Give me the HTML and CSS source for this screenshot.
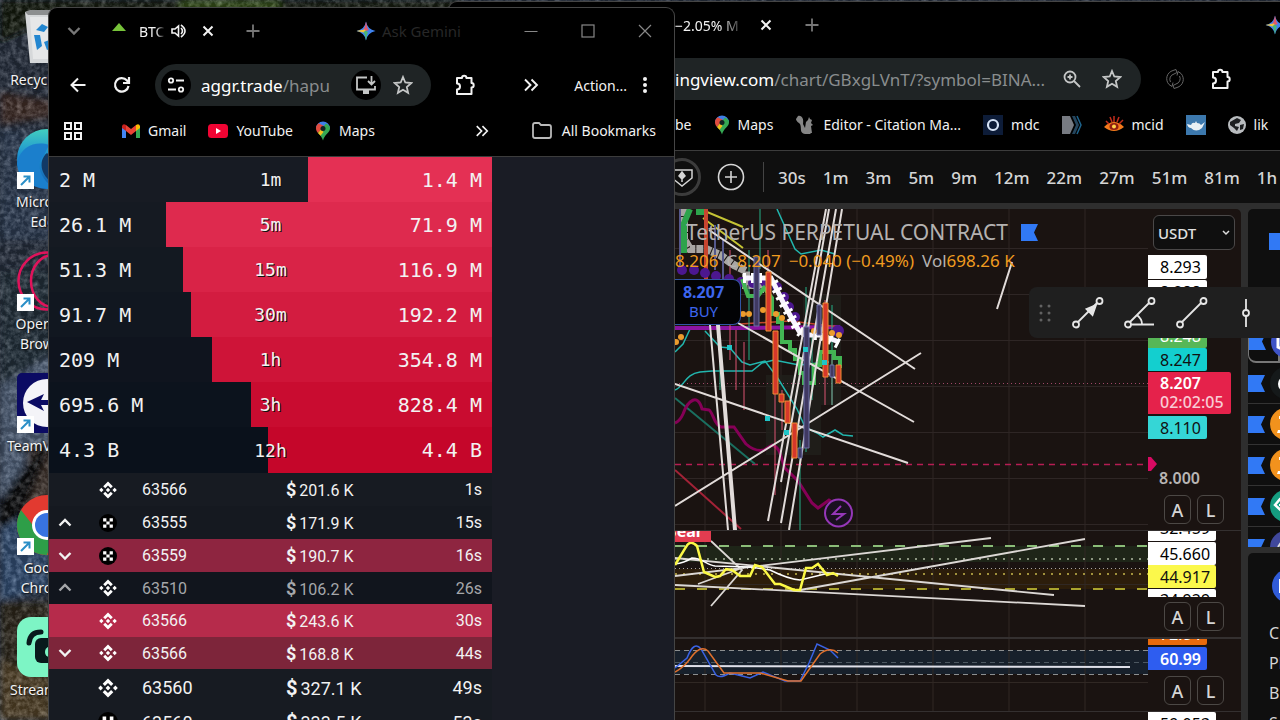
FILE: index.html
```html
<!DOCTYPE html>
<html lang="en">
<head>
<meta charset="utf-8">
<title>Trading desktop</title>
<link rel="stylesheet" href="styles.css">
</head>
<body>
<svg width="0" height="0" class="sprite" aria-hidden="true">
  <defs>
    <linearGradient id="edge" x1="0" y1="0" x2="0" y2="1"><stop offset="0" stop-color="#43cfc0"/><stop offset="0.45" stop-color="#1b8fd2"/><stop offset="1" stop-color="#155da8"/></linearGradient>
    <symbol id="i-close" viewBox="0 0 16 16"><path d="M3.500 3.500l9 9M12.500 3.500l-9 9" fill="none" stroke="currentColor" stroke-width="2"/></symbol>
    <symbol id="i-plus" viewBox="0 0 16 16"><path d="M8 1.500v13M1.500 8h13" fill="none" stroke="currentColor" stroke-width="1.800"/></symbol>
    <symbol id="i-gemini" viewBox="0 0 20 20"><path d="M10 0.500Q11.500 8.500 19.500 10Q11.500 11.500 10 19.500Q8.500 11.500 0.500 10Q8.500 8.500 10 0.500Z" fill="#3f83f0"/><path d="M10 0.500Q11.500 8.500 13 9L10 10Z M10 0.500Q8.500 8.500 7 9L10 10Z" fill="#e0586a"/><path d="M0.500 10Q8 8.500 8.500 8.500L10 10L8.500 11.500Q8 11.500 0.500 10Z" fill="#f2c53c"/><path d="M10 19.500Q8.700 12 7.500 11L10 9.500L12 11.500Q11 12.500 10 19.500Z" fill="#49b675"/></symbol>
    <symbol id="i-star" viewBox="0 0 20 20"><path d="M10 2l2.300 5.500 6 .500-4.500 4 1.300 5.800L10 14.700l-5.100 3.100 1.300-5.800-4.500-4 6-.500z" fill="none" stroke="currentColor" stroke-width="1.800"/></symbol>
    <symbol id="i-puzzle" viewBox="0 0 22 22"><path d="M3 4h5a2.200 2.200 0 0 1 4.400 0H17.500v5a2.200 2.200 0 0 1 0 4.400V20H3v-4.600a3 3 0 0 0 0-6z" fill="none" stroke="currentColor" stroke-width="2" stroke-linejoin="round"/></symbol>
    <symbol id="i-more" viewBox="0 0 16 16"><path d="M2 2.500L7.500 8 2 13.500M8.500 2.500L14 8l-5.500 5.500" fill="none" stroke="currentColor" stroke-width="1.900"/></symbol>
    <symbol id="i-pin" viewBox="0 0 16 20"><path d="M8 0.500a7 7 0 0 0-7 7h14a7 7 0 0 0-7-7z" fill="#3f7fe8"/><path d="M1 7.500C1 9 1.700 10.500 3 12L9 5 3.500 2.200A7 7 0 0 0 1 7.500z" fill="#e14b3d"/><path d="M3 12l8-9.500C14 4 15 5.500 15 7.500c0 4-5.500 6-7 12C7 16 5 14 3 12z" fill="#35a853"/><path d="M3 12l3-3.500 2.500 2.500L5.500 14.700z" fill="#f6bd1c"/><circle cx="8" cy="7.500" r="2.500" fill="#122"/></symbol>
    <symbol id="i-binance" viewBox="0 0 20 20"><path d="M10 0.500l5.300 5.300-2.200 2.200L10 4.900 6.900 8 4.700 5.800zM10 19.500l5.300-5.300-2.200-2.200-3.100 3.100L6.900 12l-2.200 2.200zM10 7.600l2.400 2.400-2.400 2.400L7.600 10zM2.600 7.600L5 10l-2.400 2.400L0.200 10zM17.400 7.600l2.400 2.400-2.400 2.400L15 10z" fill="#fff"/></symbol>
    <symbol id="i-okx" viewBox="0 0 20 20"><circle cx="10" cy="10" r="10" fill="#000"/><path d="M4.600 4.600h3.600v3.600h3.600V4.600h3.600v3.600h-3.600v3.600h3.600v3.600h-3.600v-3.600H8.200v3.600H4.600v-3.600h3.600V8.200H4.600z" fill="#fff"/></symbol>
    <symbol id="i-up" viewBox="0 0 16 16"><path d="M2.500 10.500L8 5l5.500 5.500" fill="none" stroke="currentColor" stroke-width="2.400"/></symbol>
    <symbol id="i-down" viewBox="0 0 16 16"><path d="M2.500 5L8 10.500 13.500 5" fill="none" stroke="currentColor" stroke-width="2.400"/></symbol>
    <symbol id="i-flag" viewBox="0 0 17 17"><path d="M0 0h17l-4 8.500 4 8.500H0z" fill="#3179f5"/></symbol>
    <symbol id="i-link" viewBox="0 0 17 17"><path d="M0 0h17v17H0z" fill="#fff"/><path d="M4 13l8-8M6.500 4.500h6v6" fill="none" stroke="#2a8fc7" stroke-width="2"/></symbol>
  </defs>
</svg>

<main class="desktop">
  <svg class="wallpaper" viewBox="0 0 1280 720" preserveAspectRatio="xMinYMin slice" aria-hidden="true">
    <defs>
      <filter id="grain" x="0" y="0" width="100%" height="100%" color-interpolation-filters="sRGB"><feTurbulence type="fractalNoise" baseFrequency="0.180" numOctaves="4" seed="4"/><feColorMatrix values="1.400 0.600 0 0 -0.800  1.400 0.600 0 0 -0.790  1.400 0.600 0 0 -0.770  0 0 0 0 0.300"/></filter>
      <filter id="soft"><feGaussianBlur stdDeviation="3"/></filter>
    </defs>
    <path d="M0 0h1280v720H0z" fill="#2a3342"/>
    <g filter="url(#soft)">
      <path d="M0 0h460v12H70L0 42z" fill="#131c08"/>
      <path d="M180 0h100v10h-100z" fill="#3c5c14"/>
      <path d="M0 92l60 10v14L0 125z" fill="#46322b"/>
      <path d="M0 130h60v110H0z" fill="#31425a"/>
      <path d="M0 270h60v80L0 390z" fill="#28343f"/>
      <path d="M0 385l60-35v100L0 500z" fill="#586a84"/>
      <path d="M30 445h30v70H10z" fill="#483a33"/>
      <path d="M0 500l40-55 10 4L0 570z" fill="#080a0c"/>
      <path d="M0 530l50-30v90L0 600z" fill="#38577f"/>
      <path d="M0 602h60v118H0z" fill="#33291a"/>
      <path d="M0 660l50 20v40H0z" fill="#5b482c"/>
    </g>
    <path d="M0 0h1280v720H0z" filter="url(#grain)"/>
  </svg>

  <ul class="shortcuts">
    <li class="shortcut">
      <svg viewBox="0 0 60 60"><path d="M8 5l5-1h38l3 2-5 50H13z" fill="#d6d8da"/><path d="M8 5l5-2h38l3 3-6 2H11z" fill="#8d8f90"/><path d="M13 10h35v42H16z" fill="#e6e7e8"/><path d="M19 23l6-6 6 3-4 5zM17 28l6 0 2 11-5 4zM27 35l8-3 3 8-8 3zM33 18l7 5-3 8-5-3z" fill="#2386d0"/></svg>
      <span>Recycle Bin</span>
    </li>
    <li class="shortcut">
      <svg viewBox="0 0 60 60"><circle cx="30" cy="30" r="30" fill="url(#edge)"/><path d="M0 34C4 16 20 12 32 16L26 28C18 34 24 54 40 60 14 62 0 48 0 34z" fill="#1b7fcc"/><path d="M30 24c-10 8-6 26 10 32l14-10z" fill="#123a66"/></svg>
      <svg class="arrow"><use href="#i-link"/></svg>
      <span>Microsoft Edge</span>
    </li>
    <li class="shortcut">
      <svg viewBox="0 0 60 60"><g fill="none" stroke="#e0135b" stroke-width="2.500"><circle cx="30" cy="30" r="28.500"/><ellipse cx="36" cy="30" rx="22" ry="26"/></g></svg>
      <svg class="arrow"><use href="#i-link"/></svg>
      <span>Opera GX Browser</span>
    </li>
    <li class="shortcut">
      <svg viewBox="0 0 60 60"><rect width="60" height="60" rx="5" fill="#0b0b63"/><circle cx="30" cy="30" r="24" fill="#f4f4f8"/><path d="M10 29l17-8-3 6h16v5H24l3 6z" fill="#0b0b63"/></svg>
      <svg class="arrow"><use href="#i-link"/></svg>
      <span>TeamViewer</span>
    </li>
    <li class="shortcut">
      <svg viewBox="0 0 60 60"><circle cx="30" cy="30" r="30" fill="#e23a30"/><path d="M4 15a30 30 0 0 0 26 45l8-24-20-3z" fill="#2e9e48"/><circle cx="30" cy="30" r="15" fill="#fff"/><circle cx="30" cy="30" r="12" fill="#3873e0"/></svg>
      <svg class="arrow"><use href="#i-link"/></svg>
      <span>Google Chrome</span>
    </li>
    <li class="shortcut">
      <svg viewBox="0 0 60 60"><rect width="60" height="60" rx="14" fill="#7df5c5"/><path d="M12 26q1-11 12-11" fill="none" stroke="#081a1c" stroke-width="5" stroke-linecap="round"/><rect x="18" y="21" width="34" height="25" rx="6" fill="#081a1c"/><ellipse cx="32" cy="35" rx="4" ry="5" fill="#7df5c5"/></svg>
      <span>Streamlabs</span>
    </li>
  </ul>

  <section class="window window-back">
    <div class="tabs">
      <div class="tab">
        <span class="tab-title fade">−2.05% M</span>
        <button class="icon-btn" aria-label="Close tab"><svg class="s16"><use href="#i-close"/></svg></button>
      </div>
      <button class="icon-btn dim new-tab" aria-label="New tab"><svg class="s16"><use href="#i-plus"/></svg></button>
      <button class="icon-btn edge-gem" aria-label="Gemini"><svg class="s20"><use href="#i-gemini"/></svg></button>
    </div>
    <div class="address-row">
      <div class="omnibox omnibox-back">
        <span class="url"><b>ingview.com</b>/chart/GBxgLVnT/?symbol=BINA...</span>
        <button class="icon-btn soft" aria-label="Zoom"><svg class="s20" viewBox="0 0 20 20" fill="none" stroke="currentColor" stroke-width="1.800"><circle cx="8" cy="8" r="5.500"/><path d="M12 12l6 6M8 5.500v5M5.500 8h5"/></svg></button>
        <button class="icon-btn soft" aria-label="Bookmark"><svg class="s20"><use href="#i-star"/></svg></button>
      </div>
      <button class="icon-btn ext" aria-label="Extension"><svg class="s20" viewBox="0 0 20 20" fill="none" stroke="currentColor"><path d="M8 1.500a8.500 8.500 0 0 0-4 14l3 2 1-4M12 18.500a8.500 8.500 0 0 0 4-14l-3-2-1 4M8 1.500l3-1 1 3-3 1.500a5.500 5.500 0 0 0-3.500 8M12 18.500l-3 1-1-3 3-1.500a5.500 5.500 0 0 0 3.500-8"/></svg></button>
      <button class="icon-btn" aria-label="Extensions"><svg class="s22"><use href="#i-puzzle"/></svg></button>
    </div>
    <nav class="bookmarks bookmarks-back">
      <a href="#" class="bm">be</a>
      <a href="#" class="bm"><svg class="pin"><use href="#i-pin"/></svg>Maps</a>
      <a href="#" class="bm"><svg class="s20" viewBox="0 0 20 20"><path d="M3 1c4-1 6 3 5 8l2 4 1-6 2-2 1-3 1 2 2 1-1 3 2 2-2 1 1 7h-2l1 1h-6C4 18 7 13 5 9 4 8 1 6 1 4z" fill="#858585"/></svg>Editor - Citation Ma...</a>
      <a href="#" class="bm mdc"><svg class="s20" viewBox="0 0 20 20"><path d="M0 0h20v20H0z" fill="#0d1c38"/><circle cx="10" cy="10" r="5" fill="none" stroke="#d5e2f5" stroke-width="2.200"/></svg>mdc</a>
      <a href="#" class="bm" aria-label="Bookmark"><svg class="s20" viewBox="0 0 20 20"><path d="M0 1h8l4 9-4 9H0z" fill="#777b82"/><path d="M10 1l4 9-4 9h3l4-9-4-9z" fill="#24455d"/><path d="M15 1l4 9-4 9" fill="none" stroke="#1d638c" stroke-width="1.500"/></svg></a>
      <a href="#" class="bm"><svg class="s20" viewBox="0 0 20 20"><path d="M0 12q10-10 20 0-10 8-20 0z" fill="#f47a1c"/><path d="M2 6l3 3M6 2l2 5M10 1v6M15 2l-2 5M19 5l-4 4" stroke="#c42d1c" stroke-width="1.500"/><ellipse cx="10" cy="11.500" rx="4.500" ry="3.500" fill="#8f1c12"/><circle cx="10" cy="11.500" r="2" fill="#ffd14a"/></svg>mcid</a>
      <a href="#" class="bm" aria-label="Docker"><svg class="s20" viewBox="0 0 20 20"><path d="M0 0h20v20H0z" fill="#3c78ad"/><path d="M1 9l4 1q1-3 4-2l1-2 1 2q3 0 4 2l4-3-3 6q-6 5-11 0-3 0-4-4z" fill="#e8f0f5"/></svg></a>
      <a href="#" class="bm"><svg class="s18" viewBox="0 0 18 18"><circle cx="9" cy="9" r="9" fill="#b9bcbf"/><path d="M9 2l4 2-2 3-4 1 0 2 4 1-2 4-3-3-4-3 0-3zM12 9l4-1-1 5-3 1z" fill="#1c1e20"/></svg>lik</a>
    </nav>
    <div class="tv">
      <div class="tv-toolbar">
        <button class="round-btn" aria-label="Symbol"><svg viewBox="0 0 38 38" fill="none" stroke="#d5d5d5" stroke-width="1.500"><circle cx="19" cy="19" r="17.500" stroke="#3c3c3c" stroke-width="3"/><path d="M9 12h20v8l-10 8-10-8z"/><path d="M19 14v10M16 18l3-4 3 4-3 3z" fill="#d5d5d5"/></svg></button>
        <button class="round-btn add" aria-label="Add"><svg viewBox="0 0 28 28" fill="none" stroke="#d5d5d5" stroke-width="1.600"><circle cx="14" cy="14" r="12.500"/><path d="M14 8v12M8 14h12"/></svg></button>
        <div class="intervals">
          <button>30s</button><button>1m</button><button>3m</button><button>5m</button><button>9m</button><button>12m</button><button>22m</button><button>27m</button><button>51m</button><button>81m</button><button>1h</button>
        </div>
      </div>
      <div class="tv-body">
        <div class="chart">
          <div class="pane pane-main">
            <div class="plot">
              <svg class="canvas" viewBox="675 209 473 321" preserveAspectRatio="none" fill="none">
                <path d="M705 209v321M781 209v321M857 209v321M933 209v321M1009 209v321M1085 209v321M675 248.500h473M675 294.500h473M675 340.500h473M675 386.500h473M675 432.500h473M675 478.500h473M675 524.500h473" stroke="#2e2625"/>
                <path d="M766 375h55v80h-55zM803 295h38v110h-38z" fill="#20201c" opacity="0.800"/>
                <path d="M675 383.500h473" stroke="#a04868" stroke-dasharray="1 3"/>
                <path d="M675 464.500h473" stroke="#b51d53" stroke-width="1.300" stroke-dasharray="6 5"/>
                <path d="M675 398L755 464" stroke="#1a6f60" stroke-width="2"/>
                <path d="M675 470L741 529" stroke="#a32237" stroke-width="2"/>
                <path d="M675 423q5-2 8-9c5-14 15-21 19-5l7 1c4 2 5 15 12 17l13 0 12 17q9 8 18 6l8-5c9 2 9 15 13 23l13 13 14 22 6 5 11-8 6 4" stroke="#850057" stroke-width="3"/>
                <path d="M675 390c10-4 10-16 25-18l12-1h40l10-8 12-3 25 5 30-3M777 209l18 40 6 5 20-4 14 4M675 352l8-8 8-17M705 331l15 16 10 1 12 14 8 3 15-4 12 16 20 32 8 18 12 6 6 4 12-7 8 5 10 1" stroke="#22b6ae" stroke-width="1.500"/>
                <path d="M700 209l43 18M703 218l40 30" stroke="#c5c334" stroke-width="2"/>
                <path d="M675 328h70l95-1" stroke="#8b14a2" stroke-width="4"/>
                <path d="M740 324l50-3 50 6" stroke="#c2472d" stroke-width="1.500"/>
                <g stroke="#db5573"><path d="M744 342v68M730 250v110M736 330v60M775 370v125M768 250v60M782 390v40M825 300v105M832 355v50"/></g>
                <g stroke="#25b087"><path d="M749 250v110M800 440v90M806 287v165M812 330v70M832 305v100M760 209v60M720 355v35"/></g>
                <path d="M684 209v30l6 10h16l14 6 14 10 12 6v14h14v8" stroke="#a8a5a2" stroke-width="8" stroke-dasharray="7 1"/>
                <path d="M690 209l-6 14v30M696 212h10" stroke="#2da34c" stroke-width="6"/>
                <path d="M706 209v70" stroke="#c8452f" stroke-width="4"/>
                <path d="M680 209v60M715 225v45M723 240v40" stroke="#55588c" stroke-width="2"/>
                <g fill="#4c178f"><circle cx="682" cy="270" r="5"/><circle cx="694" cy="270" r="5"/><circle cx="705" cy="273" r="5"/><circle cx="716" cy="276" r="5"/><circle cx="729" cy="279" r="5"/><circle cx="741" cy="282" r="5"/><circle cx="753" cy="283" r="5"/><circle cx="765" cy="282" r="5"/><circle cx="777" cy="287" r="5"/><circle cx="784" cy="297" r="5"/><circle cx="789" cy="307" r="5"/><circle cx="795" cy="317" r="5"/><circle cx="838" cy="331" r="6"/></g>
                <path d="M742 279l6 17h10l6-8 8 10v16h6v8h4v20h8v8h5v9h5v14h4v10h10v-18h6v-13h14v6h6v10" stroke="#43b553" stroke-width="4"/>
                <path d="M743 278h28l7 14 6 12 7 13 8 14 6 4h16l18 7" stroke="#f8f5ff" stroke-width="5"/>
                <path d="M743 278h28l7 14 6 12 7 13 8 14 6 4h16l18 9" stroke="#fff" stroke-width="10" stroke-dasharray="3 5"/>
                <g fill="#ec9c2d"><circle cx="676" cy="342" r="3"/><circle cx="681" cy="337" r="3"/><circle cx="743" cy="314" r="3"/><circle cx="749" cy="314" r="3"/><circle cx="763" cy="310" r="3"/><circle cx="776" cy="314" r="3"/><circle cx="782" cy="318" r="3"/><circle cx="814" cy="331" r="3"/><circle cx="821" cy="330" r="3"/><circle cx="832" cy="333" r="3"/><circle cx="839" cy="335" r="3"/></g>
                <g stroke="#e2dcda" stroke-width="2"><path d="M710 325l18 205M717 325l17 205M719 325l17 205M768 521l58-312M781 482l48-273M781 523l55-314M789 530l53-321M709 230l206 139M675 506l246-153M675 384l233 79M738 323l176 99M1012 262l-15 47"/></g>
                <g fill="#403962" stroke="#6c71a7"><path d="M754 257h5v69h-5zM804 327h5v121h-5zM798 448h4v10h-4zM817 305h4v30h-4zM830 365h4v12h-4z"/></g>
                <g fill="#d5382b" stroke="#ef8d35"><path d="M766 272h5v59h-5zM773 331h5v63h-5zM779 394h5v8h-5zM785 401h5v22h-5zM792 423h5v35h-5zM823 303h5v74h-5zM836 365h5v18h-5z"/></g>
                <path d="M727 345h5v5h-5zM765 416h5v5h-5zM784 430h5v5h-5zM803 347h5v5h-5zM822 360h5v5h-5z" fill="#20c5c8"/>
                <circle cx="838.500" cy="513" r="13.500" fill="#1a1020" stroke="#9537b8" stroke-width="2"/>
                <path d="M841 506l-8 8h11l-8 6" stroke="#9537b8" stroke-width="2"/>
              </svg>
              <div class="legend">
                <h1>TetherUS PERPETUAL CONTRACT</h1>
                <svg class="s17"><use href="#i-flag"/></svg>
              </div>
              <p class="ohlc"><span>8.206</span><span class="plain">C</span><span>8.207</span><span class="chg">−0.040 (−0.49%)</span><span class="plain vol">Vol</span><span>698.26 K</span></p>
              <button class="buy"><strong>8.207</strong><span>BUY</span></button>
            </div>
            <div class="scale">
              <select class="currency" aria-label="Currency"><option>USDT</option></select>
              <span class="tag white">8.293</span>
              <span class="tag white second">8.288</span>
              <span class="tag green">8.248</span>
              <span class="tag cyan">8.247</span>
              <span class="tag red">8.207<em>02:02:05</em></span>
              <span class="tag aqua">8.110</span>
              <span class="tick">8.000</span>
              <svg class="marker" viewBox="0 0 9 14"><path d="M0 0h3l6 7-6 7H0z" fill="#d80a62"/></svg>
              <div class="modes"><button>A</button><button>L</button></div>
            </div>
          </div>
          <div class="pane pane-rsi">
            <div class="plot">
              <svg class="canvas" viewBox="675 531 473 106" preserveAspectRatio="none" fill="none">
                <path d="M675 546h473v16H675z" fill="#1e2518"/><path d="M675 569h473v20H675z" fill="#2c1d0b"/>
                <path d="M705 531v106M781 531v106M857 531v106M933 531v106M1009 531v106M1085 531v106M675 584.500h473" stroke="#302824"/>
                <path d="M675 546h473" stroke="#8bbd78" stroke-width="1.800" stroke-dasharray="10 12"/>
                <path d="M675 559h473" stroke="#b1bca4" stroke-width="1.500" stroke-dasharray="2 6"/>
                <path d="M675 568.500h473" stroke="#aaa4a0" stroke-dasharray="1 3"/>
                <path d="M675 574h473" stroke="#c7b94e" stroke-width="1.500" stroke-dasharray="2 6"/>
                <path d="M675 589h473" stroke="#aaa42e" stroke-width="1.800" stroke-dasharray="10 12"/>
                <g stroke="#dcd8d5" stroke-width="1.800"><path d="M675 558l379 37M675 585l410 21M675 576l316-38M800 590l285-51M711 541l31 29-31 36M698 584l44-16"/></g>
                <path d="M675 564q9-1 17-6c10 0 15 7 23 8l35 1 20 3q18 9 30 10l25-6h13" stroke="#fff" stroke-width="1.500"/>
                <path d="M675 565l11-18q4-8 11-1l7 26 11 5 5-1 6-7 6 1 8 6h10l5-11 7 2 13 17h5l14 6h6l6-22h6l6-4 9 11 6-2 5 3" stroke="#fbf845" stroke-width="2.500"/>
              </svg>
              <span class="bear">Bear</span>
            </div>
            <div class="scale">
              <div class="clip clip-top"><span class="tag white wide">32.459</span></div>
              <span class="tag white wide lead">45.660</span>
              <span class="tag yellow wide">44.917</span>
              <div class="clip clip-bottom"><span class="tag white wide">34.929</span></div>
              <div class="modes"><button>A</button><button>L</button></div>
            </div>
          </div>
          <div class="pane pane-stoch">
            <div class="plot">
              <svg class="canvas" viewBox="675 639 473 72" preserveAspectRatio="none" fill="none">
                <path d="M675 650h473v24H675z" fill="#17202b"/>
                <path d="M705 639v72M781 639v72M857 639v72M933 639v72M1009 639v72M1085 639v72M675 682.500h473" stroke="#302824"/>
                <path d="M675 650.500h473M675 674.500h473" stroke="#8c8f90" stroke-dasharray="5 4"/><path d="M675 662.500h473" stroke="#4c5760" stroke-dasharray="5 4"/>
                <path d="M675 666l455 1" stroke="#dedfe8" stroke-width="2"/>
                <path d="M675 668l12-10q7-18 14-9l15 26q4 4 14-2l20 5 13-6 22 9h15l9-18 8-19 13 6 8 8" stroke="#3a62e4" stroke-width="1.500"/>
                <path d="M675 672q8-4 15-13 10-15 18-8l16 22h36l28 8h13l19-27q10-8 18-1" stroke="#e0702c" stroke-width="1.500"/>
              </svg>
            </div>
            <div class="scale">
              <div class="clip clip-orange"><span class="tag orange">72.84</span></div>
              <span class="tag blue">60.99</span>
              <div class="modes"><button>A</button><button>L</button></div>
            </div>
          </div>
          <div class="pane pane-last">
            <div class="plot"></div>
            <div class="scale"><span class="tag white wide">59.053</span></div>
          </div>
        </div>
        <aside class="side">
          <div class="watch">
            <div class="watch-head"><svg class="s17"><use href="#i-flag"/></svg></div>
            <div class="watch-row active"><svg class="s17"><use href="#i-flag"/></svg><svg class="coin" viewBox="0 0 32 32"><circle cx="16" cy="16" r="16" fill="#3e53c6"/><path d="M16 6l9 5v10l-9 5-9-5V11z" fill="none" stroke="#fff" stroke-width="3"/></svg></div>
            <div class="watch-row"><svg class="s17"><use href="#i-flag"/></svg><svg class="coin" viewBox="0 0 32 32"><circle cx="16" cy="16" r="16" fill="#15191a"/><ellipse cx="14" cy="17" rx="6" ry="7" fill="#fff"/></svg></div>
            <div class="watch-row"><svg class="s17"><use href="#i-flag"/></svg><svg class="coin" viewBox="0 0 32 32"><circle cx="16" cy="16" r="16" fill="#f2921d"/><path d="M9 8h9q4 4 0 8 5 5 0 9H7l1-3h2l2-11h-3zM14 5v4" fill="#fff"/></svg></div>
            <div class="watch-row"><svg class="s17"><use href="#i-flag"/></svg><svg class="coin" viewBox="0 0 32 32"><circle cx="16" cy="16" r="16" fill="#f2921d"/><path d="M9 8h9q4 4 0 8 5 5 0 9H7l1-3h2l2-11h-3zM14 5v4" fill="#fff"/></svg></div>
            <div class="watch-row"><svg class="s17"><use href="#i-flag"/></svg><svg class="coin" viewBox="0 0 32 32"><circle cx="16" cy="16" r="16" fill="#159d80"/><path d="M5 15l5-6h12l5 6-11 10z" fill="none" stroke="#fff" stroke-width="2.500"/><path d="M9 15h14" stroke="#fff" stroke-width="2"/></svg></div>
            <div class="watch-row"><svg class="s17"><use href="#i-flag"/></svg><svg class="coin" viewBox="0 0 32 32"><circle cx="16" cy="16" r="16" fill="#40489c"/><path d="M8 16l6-9 3 5" fill="none" stroke="#ddd" stroke-width="2"/></svg></div>
          </div>
          <div class="details">
            <svg class="detail-icon" viewBox="0 0 40 40"><circle cx="20" cy="20" r="17" fill="#305bd8"/><path d="M10 13h20v14H10z" fill="#fff"/></svg>
            <p>C</p><p>Pl</p><p>Bl</p><p>S</p>
          </div>
        </aside>
        <div class="draw-bar">
          <svg class="grip" viewBox="0 0 12 18" fill="#626262"><circle cx="2" cy="2" r="1.500"/><circle cx="10" cy="2" r="1.500"/><circle cx="2" cy="9" r="1.500"/><circle cx="10" cy="9" r="1.500"/><circle cx="2" cy="16" r="1.500"/><circle cx="10" cy="16" r="1.500"/></svg>
          <button aria-label="Arrow"><svg viewBox="0 0 32 32" fill="none" stroke="#e6e6e6" stroke-width="1.800"><circle cx="4" cy="27.500" r="3"/><circle cx="27.500" cy="4" r="3"/><path d="M6 25L25 6"/><path d="M24 8l-3.500 10-6-6z" fill="#e6e6e6"/></svg></button>
          <button aria-label="Trend angle"><svg viewBox="0 0 32 32" fill="none" stroke="#e6e6e6" stroke-width="1.800"><circle cx="4" cy="27.500" r="3"/><circle cx="27.500" cy="4" r="3"/><path d="M6 25L25 6M7 27.500h23M13 18q5 4 5 9"/></svg></button>
          <button aria-label="Trend line"><svg viewBox="0 0 32 32" fill="none" stroke="#e6e6e6" stroke-width="1.800"><circle cx="4" cy="27.500" r="3"/><circle cx="27.500" cy="4" r="3"/><path d="M6 25L25 6"/></svg></button>
          <button aria-label="Vertical line"><svg viewBox="0 0 32 32" fill="none" stroke="#e6e6e6" stroke-width="1.800"><circle cx="18" cy="16" r="3"/><path d="M18 2v11M18 19v11"/></svg></button>
        </div>
      </div>
    </div>
  </section>

  <section class="window window-front">
    <div class="tabs">
      <button class="icon-btn dim tab-search" aria-label="Search tabs"><svg class="s16"><use href="#i-down"/></svg></button>
      <div class="tab">
        <svg class="favicon" viewBox="0 0 14 8"><path d="M0 8l7-8 7 8z" fill="#77c33a"/></svg>
        <span class="tab-title fade">BTC</span>
        <button class="icon-btn sound" aria-label="Mute"><svg class="s16" viewBox="0 0 16 16" fill="none" stroke="currentColor" stroke-width="1.600"><path d="M1 6h3l3.500-3v10L4 10H1zM10 5q3 3 0 6M10 2q8 6 0 12"/></svg></button>
        <button class="icon-btn" aria-label="Close tab"><svg class="s16"><use href="#i-close"/></svg></button>
      </div>
      <button class="icon-btn dim new-tab" aria-label="New tab"><svg class="s16"><use href="#i-plus"/></svg></button>
      <button class="gemini"><svg class="s20"><use href="#i-gemini"/></svg>Ask Gemini</button>
      <div class="controls">
        <button aria-label="Minimise"><svg class="s16" viewBox="0 0 16 16"><path d="M1.500 8.500h13" stroke="currentColor"/></svg></button>
        <button aria-label="Maximise"><svg class="s16" viewBox="0 0 16 16"><rect x="2" y="2" width="12" height="12" fill="none" stroke="currentColor" stroke-width="1.200"/></svg></button>
        <button aria-label="Close"><svg class="s16" viewBox="0 0 16 16"><path d="M2 2l12 12M14 2L2 14" stroke="currentColor" stroke-width="1.200"/></svg></button>
      </div>
    </div>
    <div class="address-row">
      <button class="icon-btn back" aria-label="Back"><svg class="s18" viewBox="0 0 18 18" fill="none" stroke="currentColor" stroke-width="2"><path d="M16.500 9H2.500M9 2.500L2.500 9 9 15.500"/></svg></button>
      <button class="icon-btn" aria-label="Reload"><svg class="s18" viewBox="0 0 18 18" fill="none" stroke="currentColor" stroke-width="2.200"><path d="M15.500 10A6.800 6.800 0 1 1 14 4.500l1.500 2M16 1v6h-6"/></svg></button>
      <div class="omnibox omnibox-front">
        <button class="disc" aria-label="Site settings"><svg class="s18" viewBox="0 0 18 18" fill="none" stroke="currentColor" stroke-width="1.800"><circle cx="4" cy="4.500" r="2.200"/><circle cx="14" cy="13.500" r="2.200"/><path d="M9 4.500h8M1 13.500h8"/></svg></button>
        <span class="url"><b>aggr.trade</b>/hapu</span>
        <button class="disc soft" aria-label="Install"><svg class="s20" viewBox="0 0 20 20" fill="none" stroke="currentColor" stroke-width="1.800"><path d="M11 2.500H1v12h18V11M15.500 1v8M12 6l3.500 3.500L19 6"/><path d="M7 17h6" stroke-width="4"/></svg></button>
        <button class="icon-btn soft" aria-label="Bookmark"><svg class="s20"><use href="#i-star"/></svg></button>
      </div>
      <button class="icon-btn" aria-label="Extensions"><svg class="s22"><use href="#i-puzzle"/></svg></button>
      <button class="icon-btn overflow" aria-label="More"><svg class="s16"><use href="#i-more"/></svg></button>
      <button class="action">Action...<svg viewBox="0 0 4 16" class="dots" fill="currentColor"><circle cx="2" cy="2" r="2"/><circle cx="2" cy="8" r="2"/><circle cx="2" cy="14" r="2"/></svg></button>
    </div>
    <nav class="bookmarks bookmarks-front">
      <a href="#" class="bm" aria-label="Apps"><svg class="s18" viewBox="0 0 18 18" fill="none" stroke="currentColor" stroke-width="2"><path d="M1 1h6v6H1zM11 1h6v6h-6zM1 11h6v6H1zM11 11h6v6h-6z"/></svg></a>
      <a href="#" class="bm gmail"><svg class="s18" viewBox="0 0 18 14"><path d="M0 2v12h4V6z" fill="#4285f4"/><path d="M18 2v12h-4V6z" fill="#34a853"/><path d="M4 1v6l5 4 5-4V1L9 5z" fill="#ea4335"/><path d="M14 1q3-2 4 1v2l-4 3z" fill="#fbbc04"/><path d="M4 1Q1-1 0 2v2l4 3z" fill="#c5221f"/></svg>Gmail</a>
      <a href="#" class="bm"><svg class="s20" viewBox="0 0 20 14"><rect width="20" height="14" rx="3.500" fill="#f00433"/><path d="M8 4l5 3-5 3z" fill="#fff"/></svg>YouTube</a>
      <a href="#" class="bm"><svg class="pin"><use href="#i-pin"/></svg>Maps</a>
      <button class="icon-btn bm-more" aria-label="More bookmarks"><svg class="s14"><use href="#i-more"/></svg></button>
      <a href="#" class="bm all"><svg class="s20" viewBox="0 0 20 18" fill="none" stroke="#b9b9b9" stroke-width="1.800"><path d="M1 3q0-2 2-2h4l2 2h8q2 0 2 2v9q0 2-2 2H3q-2 0-2-2z"/></svg>All Bookmarks</a>
    </nav>
    <div class="aggr">
      <div class="feed">
        <ol class="volumes">
          <li class="v1"><i style="width:41.600%"></i><span>2 M</span><b>1m</b><span>1.4 M</span></li>
          <li class="v2"><i style="width:73.500%"></i><span>26.1 M</span><b>5m</b><span>71.9 M</span></li>
          <li class="v3"><i style="width:69.700%"></i><span>51.3 M</span><b>15m</b><span>116.9 M</span></li>
          <li class="v4"><i style="width:67.900%"></i><span>91.7 M</span><b>30m</b><span>192.2 M</span></li>
          <li class="v5"><i style="width:63.100%"></i><span>209 M</span><b>1h</b><span>354.8 M</span></li>
          <li class="v6"><i style="width:54.500%"></i><span>695.6 M</span><b>3h</b><span>828.4 M</span></li>
          <li class="v7"><i style="width:50.500%"></i><span>4.3 B</span><b>12h</b><span>4.4 B</span></li>
        </ol>
        <table class="trades">
          <tbody>
            <tr><td></td><td><svg class="s18"><use href="#i-binance"/></svg></td><td>63566</td><td><b>$</b>201.6 K</td><td>1s</td></tr>
            <tr class="t2"><td><svg class="s16"><use href="#i-up"/></svg></td><td><svg class="s18"><use href="#i-okx"/></svg></td><td>63555</td><td><b>$</b>171.9 K</td><td>15s</td></tr>
            <tr class="sell"><td><svg class="s16"><use href="#i-down"/></svg></td><td><svg class="s18"><use href="#i-okx"/></svg></td><td>63559</td><td><b>$</b>190.7 K</td><td>16s</td></tr>
            <tr class="faded"><td><svg class="s16"><use href="#i-up"/></svg></td><td><svg class="s18"><use href="#i-binance"/></svg></td><td>63510</td><td><b>$</b>106.2 K</td><td>26s</td></tr>
            <tr class="sell strong"><td></td><td><svg class="s18"><use href="#i-binance"/></svg></td><td>63566</td><td><b>$</b>243.6 K</td><td>30s</td></tr>
            <tr class="sell weak"><td><svg class="s16"><use href="#i-down"/></svg></td><td><svg class="s18"><use href="#i-binance"/></svg></td><td>63566</td><td><b>$</b>168.8 K</td><td>44s</td></tr>
            <tr class="large"><td></td><td><svg class="s20"><use href="#i-binance"/></svg></td><td>63560</td><td><b>$</b>327.1 K</td><td>49s</td></tr>
            <tr class="large next"><td></td><td><svg class="s20"><use href="#i-okx"/></svg></td><td>63560</td><td><b>$</b>333.5 K</td><td>53s</td></tr>
          </tbody>
        </table>
      </div>
    </div>
  </section>
</main>
</body>
</html>
```
FILE: styles.css
```css
* { box-sizing: border-box; }
html, body { height: 100%; margin: 0; }
body { overflow: hidden; background: #1a212b; font-family: "Noto Sans", sans-serif; font-size: 14px; color: #f2f2f2; }
button { padding: 0; border: 0; background: none; color: inherit; font: inherit; cursor: pointer; }
a { color: inherit; text-decoration: none; }
ul, ol { margin: 0; padding: 0; list-style: none; }
h1, p { margin: 0; }
svg { display: block; flex: none; }
.sprite { position: absolute; }
.s14 { width: 14px; height: 14px; }
.s16 { width: 16px; height: 16px; }
.s17 { width: 17px; height: 17px; }
.s18 { width: 18px; height: 18px; }
.s20 { width: 20px; height: 20px; }
.s22 { width: 22px; height: 22px; }

.desktop { position: relative; height: 100vh; overflow: hidden; }
.wallpaper { position: absolute; inset: 0; width: 100%; height: 100%; }

.shortcuts { position: absolute; left: 0; top: 7px; width: 94px; }
.shortcut { position: relative; display: flex; flex-direction: column; align-items: center; height: 122px; line-height: 20px; text-align: center; text-shadow: 1px 1px 2px #000; }
.shortcut > svg:first-child { width: 60px; height: 60px; margin-bottom: 3px; }
.shortcut .arrow { position: absolute; left: 17px; top: 43px; width: 17px; height: 17px; }

/* Browser windows */
.window { position: absolute; bottom: 0; display: flex; flex-direction: column; background: #000; border: 1px solid #454545; border-bottom: 0; border-radius: 9px 9px 0 0; overflow: hidden; }
.window-front { left: 48px; right: 605px; top: 7px; }
.window-back { left: 448px; right: 0; top: 1px; padding-left: 226px; border-right: 0; border-top-right-radius: 0; }
.tabs { display: flex; align-items: center; flex: none; height: 46px; }
.address-row { display: flex; align-items: center; flex: none; height: 62px; }
.bookmarks { display: flex; align-items: center; flex: none; height: 41px; padding-bottom: 11px; border-bottom: 1px solid #3c3c3c; white-space: nowrap; }
.tab { display: flex; align-items: center; }
.tab-title { overflow: hidden; white-space: nowrap; }
.icon-btn { display: grid; place-items: center; flex: none; width: 40px; height: 32px; }
.dim { color: #777; }
.soft { color: #c4c6c6; }
.omnibox { display: flex; align-items: center; height: 42px; background: #1f2425; }
.url { flex: 1; overflow: hidden; white-space: nowrap; font-size: 17px; color: #898d8e; }
.url b { font-weight: 400; color: #fff; }
.bm { display: flex; align-items: center; gap: 8px; }
.pin { width: 16px; height: 20px; }

.window-front .tab-search { width: 50px; }
.window-front .tab { padding-left: 13px; width: 130px; }
.favicon { width: 14px; height: 8px; margin: 0 13px 8px 0; }
.window-front .tab-title { width: 26px; }
.fade { -webkit-mask-image: linear-gradient(90deg, #000 65%, transparent); mask-image: linear-gradient(90deg, #000 65%, transparent); }
.window-front .tab .icon-btn { width: 30px; }
.window-front .tab .sound { width: 28px; }
.window-front .new-tab { margin-left: 4px; }
.gemini { display: flex; align-items: center; gap: 6px; margin-left: auto; color: #272727; font-size: 15px; }
.controls { display: flex; margin-left: 41px; margin-right: 1px; color: #888; }
.controls button { display: grid; place-items: center; width: 57px; height: 32px; }

.window-front .address-row { padding-left: 5px; padding-right: 27px; }
.window-front .address-row .back { width: 48px; }
.omnibox-front { flex: 1; margin-left: 13px; margin-right: 14px; padding: 0 10px 0 6px; border-radius: 21px; }
.omnibox-front .url { margin-left: 10px; }
.omnibox-front .disc.soft { margin-right: 4px; margin-left: -4px; }
.omnibox-front .disc.soft + .icon-btn { margin: 0 -2px; }
.disc { display: grid; place-items: center; width: 30px; height: 30px; border-radius: 50%; background: #000; }
.overflow { margin-left: 26px; }
.action { display: flex; align-items: center; margin-left: 23px; gap: 16px; }
.dots { width: 4px; height: 16px; }

.bookmarks-front { padding-left: 15px; padding-right: 18px; gap: 22px; }
.bookmarks-front .gmail { margin-left: 18px; }
.bm-more { margin-left: auto; }
.bookmarks-front .all { margin-left: 8px; gap: 10px; }

.window-back .tab .tab-title { width: 70px; }
.window-back .tab .icon-btn { width: 42px; }
.window-back .new-tab { margin-left: 5px; }
.edge-gem { width: 20px; margin-left: auto; margin-right: -5px; }
.omnibox-back { flex: 1; padding-right: 9px; border-radius: 0 21px 21px 0; }
.window-back .address-row { padding-right: 39px; }
.window-back .address-row .ext { margin-left: 14px; margin-right: 6px; color: #666; }
.bookmarks-back { gap: 22px; }

/* Volume statistics and trade list */
.aggr { flex: 1; min-height: 0; overflow: hidden; background: #1a1c25; }
.feed { width: 443px; max-width: 100%; background: #171b22; }
.volumes { display: grid; grid-auto-rows: 45px; font-family: "DejaVu Sans Mono", monospace; font-size: 20px; }
.volumes li { position: relative; display: grid; grid-template-columns: 1fr 60px 1fr; align-items: center; padding: 0 10px; }
.volumes .v7 { height: 46px; }
.volumes i { position: absolute; right: 0; top: 0; bottom: 0; }
.volumes span, .volumes b { position: relative; }
.volumes b { font-size: 18px; font-weight: 400; text-align: center; text-shadow: 1px 1px 0 #111; }
.volumes span:last-child { text-align: right; }
.v1 { background: #171b23; } .v1 i { background: #e43054; }
.v2 { background: #151a22; } .v2 i { background: #de2a4e; }
.v3 { background: #131921; } .v3 i { background: #d92347; }
.v4 { background: #111720; } .v4 i { background: #d31c40; }
.v5 { background: #0f141e; } .v5 i { background: #ce1438; }
.v6 { background: #0c131d; } .v6 i { background: #c90c30; }
.v7 { background: #0a111b; } .v7 i { background: #c5062a; }
.trades { width: 100%; table-layout: fixed; border-collapse: collapse; font-family: Roboto, sans-serif; font-size: 16px; margin-top: 1px; }
.trades td { height: 33px; padding: 0; white-space: nowrap; }
.trades td:nth-child(1) { width: 32px; }
.trades td:nth-child(2) { width: 61px; padding-right: 7px; }
.trades td:nth-child(3) { width: 144px; }
.trades td:nth-child(5) { width: 80px; text-align: right; padding-right: 10px; }
.trades td svg { margin: 0 auto; }
.trades td:nth-child(1) svg { margin-right: 8px; }
.trades td b { margin-right: 3px; font-size: 18px; }
.trades .t2 { background: #151920; }
.trades .sell { background: #8e2540; }
.trades .strong { background: #b62b4b; }
.trades .weak { background: #7d253a; }
.trades .faded { background: #11151d; color: #a5a7aa; }
.trades .faded td, .trades .weak td { height: 32px; }
.trades .large { font-size: 18px; }
.trades .large td { height: 37px; }
.trades .large b { font-size: 20px; }
.trades .next td { height: 32px; }

/* Chart page */
.tv { display: flex; flex-direction: column; flex: 1; min-height: 0; background: #2e2e2e; font-size: 16px; color: #d5d5d5; }
.tv-toolbar { display: flex; align-items: center; flex: none; height: 52px; margin-bottom: 6px; background: #0f0f0f; overflow: hidden; }
.round-btn { margin-left: -12px; }
.round-btn svg { width: 38px; height: 38px; }
.round-btn.add { margin-left: 16px; }
.round-btn.add svg { width: 28px; height: 28px; }
.intervals { display: flex; align-items: center; gap: 17px; height: 30px; margin-left: 18px; padding-left: 14px; border-left: 1px solid #444; font-size: 17px; font-weight: 500; white-space: nowrap; }
.intervals button { flex: none; }
.tv-body { position: relative; display: flex; gap: 7px; flex: 1; min-height: 0; }
.chart { display: flex; flex-direction: column; flex: 1; min-width: 0; background: #1a1311; border-radius: 0 5px 0 0; overflow: hidden; }
.pane { display: flex; flex: none; overflow: hidden; border-bottom: 1px solid #343030; }
.pane-main { height: 322px; }
.pane-rsi { height: 108px; border-bottom-width: 2px; }
.pane-stoch { height: 73px; }
.pane-last { flex: 1; border: 0; }
.plot { position: relative; flex: 1; min-width: 0; overflow: hidden; }
.canvas { width: 100%; height: 100%; }
.scale { position: relative; display: flex; flex-direction: column; align-items: flex-start; flex: none; width: 93px; }
.legend { position: absolute; left: 11px; top: 8px; display: flex; align-items: center; gap: 13px; white-space: nowrap; color: #b5b2b1; }
.legend h1 { font-size: 21px; line-height: 30px; font-weight: 400; }
.ohlc { position: absolute; left: 0; top: 41px; display: flex; font-size: 17px; line-height: 22px; color: #f09c20; white-space: nowrap; }
.ohlc .plain { margin-left: 8px; color: #b5b2b1; }
.ohlc .chg { margin-left: 8px; }
.buy { position: absolute; left: 0; top: 70px; display: flex; flex-direction: column; align-items: center; justify-content: center; width: 66px; height: 46px; padding-right: 8px; border: 1px solid #3155a5; border-left: 0; border-radius: 0 8px 8px 0; background: #020305; color: #3d66ee; line-height: 19px; }
.buy span { font-size: 15px; }
.bear { position: absolute; left: 0; top: -9px; width: 36px; height: 20px; background: #e23c50; color: #fff; font-weight: 700; line-height: 18px; text-indent: -9px; overflow: hidden; }
.currency { width: 82px; height: 35px; margin: 6px 0 5px 5px; padding: 0 20px 0 4px; border: 1px solid #4a4848; border-radius: 6px; appearance: none; background: #0f0f0f url("data:image/svg+xml,%3Csvg xmlns='http://www.w3.org/2000/svg' width='8' height='6'%3E%3Cpath d='M1 1l3 3 3-3' fill='none' stroke='%23ddd' stroke-width='1.500'/%3E%3C/svg%3E") no-repeat right 4px center; color: #e0e0e0; font: 500 15px "Noto Sans", sans-serif; }
.tag { flex: none; width: 59px; height: 23px; padding-left: 12px; border-radius: 0 2px 2px 0; line-height: 24px; color: #111; }
.tag.wide { width: 68px; }
.white { height: 24px; background: #fff; color: #000; }
.second { margin-top: 1px; }
.green { height: 24px; margin-top: 20px; background: #57b757; color: #fff; }
.cyan { background: #13cfcf; }
.red { width: 83px; height: 42px; margin: 1px 0 2px; line-height: 19px; padding-top: 2px; background: #e5224b; color: #fff; font-weight: 600; }
.red em { display: block; font-style: normal; font-weight: 500; color: #f9ccd5; }
.aqua { background: #35d6d6; }
.tick { margin: 27px 0 9px 11px; line-height: 24px; font-weight: 600; color: #b8b5b4; }
.marker { position: absolute; left: 0; top: 248px; width: 9px; height: 14px; }
.modes { display: flex; gap: 6px; margin-left: 16px; }
.modes button { width: 27px; height: 29px; border: 1px solid #4c4845; border-radius: 6px; font-size: 18px; font-weight: 500; line-height: 26px; }
.pane-main .modes { margin-top: -4px; }
.clip { display: flex; flex: none; overflow: hidden; }
.clip-top { height: 10px; align-items: flex-end; }
.clip-bottom { height: 8px; align-items: flex-start; margin-top: 1px; margin-bottom: 5px; }
.clip-bottom .tag, .clip-top .tag { line-height: 22px; }
.lead { margin-top: 1px; height: 23px; }
.yellow { background: #fbf84b; }
.clip-orange { height: 6px; align-items: flex-end; }
.orange { background: #e96a0c; color: #fff; line-height: 24px; }
.blue { margin: 2px 0 6px; background: #2e5df0; color: #fff; font-weight: 600; }

/* Watch list */
.side { display: flex; flex-direction: column; gap: 6px; flex: none; width: 32px; overflow: hidden; }
.watch { flex: none; height: 338px; background: #0f0f0f; border-radius: 5px 0 0 0; overflow: hidden; }
.watch-head { display: flex; height: 113px; padding: 24px 0 0 21px; }
.watch-row { display: flex; align-items: center; gap: 5px; height: 41px; border-bottom: 1px solid #333; }
.watch-row.active { border: 2px solid #777; border-top: 0; border-left-width: 1px; border-radius: 0 0 0 8px; }
.coin { width: 32px; height: 32px; }
.details { flex: 1; min-height: 0; padding: 13px 0 0 21px; background: #0f0f0f; border-radius: 5px 0 0 0; line-height: 30px; overflow: hidden; white-space: nowrap; }
.detail-icon { width: 40px; height: 40px; margin: 0 0 12px; }

.draw-bar { position: absolute; right: 0; top: 78px; display: flex; align-items: center; width: 251px; height: 51px; padding-left: 10px; background: #1f1f1f; border-radius: 8px 0 0 8px; overflow: hidden; }
.grip { width: 12px; height: 18px; margin-right: 11px; }
.draw-bar button { display: grid; place-items: center; flex: none; width: 52px; height: 50px; }
.draw-bar button svg { width: 32px; height: 32px; }
```
